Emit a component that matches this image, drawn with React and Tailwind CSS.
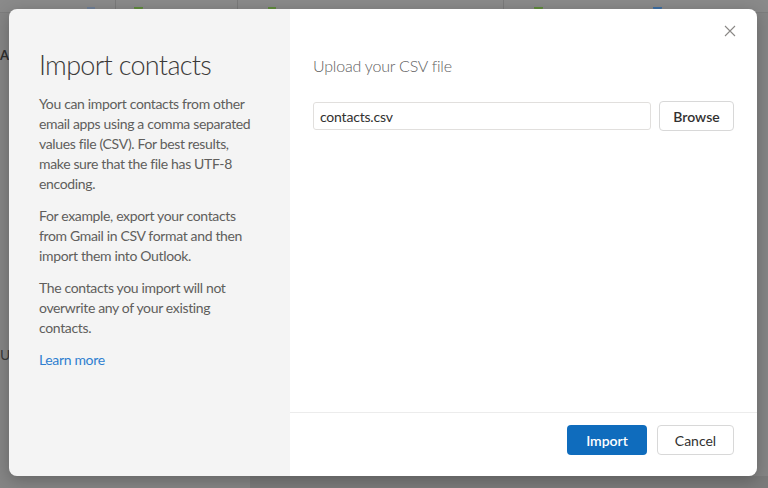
import React from "react";

const font = { fontFamily: 'Lato, "Noto Sans", sans-serif' };

function Backdrop() {
  return (
    <div className="flex flex-col w-full h-full">
      <div className="h-[13px] flex items-end border-b border-[#7d7d7d] bg-[#8a8a8a]">
        <div className="w-[116px] h-full border-r border-[#7a7a7a] flex items-end justify-end pr-[20px]">
          <div className="w-[8px] h-[2px] bg-[#6f7f96] mb-[3px]" />
        </div>
        <div className="w-[122px] h-full border-r border-[#7a7a7a] flex items-end pl-[18px]">
          <div className="w-[9px] h-[5px] rounded-b-full bg-[#5f8a3c]" />
        </div>
        <div className="w-[266px] h-full border-r border-[#7a7a7a] flex items-end pl-[30px] gap-[230px]">
          <div className="w-[8px] h-[5px] rounded-b-full bg-[#5f8a3c]" />
        </div>
        <div className="flex-1 h-full flex items-end pl-[30px] gap-[110px]">
          <div className="w-[9px] h-[5px] rounded-b-full bg-[#5f8a3c]" />
          <div className="w-[9px] h-[5px] rounded-b-full bg-[#3d6ea3]" />
        </div>
      </div>
      <div className="flex-1 flex">
        <div className="w-[9px] flex flex-col bg-[#858585]">
          <div className="h-[36px]" />
          <div className="text-[13px] font-bold text-[#2e2e2e] leading-none">A</div>
          <div className="h-[286px]" />
          <div className="text-[14px] text-[#3a3a3a] leading-none">U</div>
        </div>
        <div className="flex-1 bg-[#858585]" />
      </div>
      <div className="h-[12px] flex">
        <div className="w-[250px] bg-[#858585]" />
        <div className="flex-1 bg-[#7b7b7b]" />
      </div>
    </div>
  );
}

export default function App() {
  return (
    <div className="relative w-[768px] h-[488px] overflow-hidden bg-[#858585]" style={font}>
      <Backdrop />
      <div className="absolute left-[9px] top-[9px] w-[748px] h-[467px] rounded-[8px] overflow-hidden flex shadow-[0_4px_16px_rgba(0,0,0,0.25)]">
        <div className="w-[281px] bg-[#f4f4f4] pl-[30px] pr-[20px] pt-[38px]">
          <h1 className="text-[27px] font-light leading-[36px] text-[#3b3a39] tracking-[-0.7px]">Import contacts</h1>
          <div className="mt-[11px] text-[14px] leading-[20px] text-[#605e5c] tracking-[-0.35px] flex flex-col gap-[12px] whitespace-nowrap">
            <p>You can import contacts from other<br />email apps using a comma separated<br />values file (CSV). For best results,<br />make sure that the file has UTF-8<br />encoding.</p>
            <p>For example, export your contacts<br />from Gmail in CSV format and then<br />import them into Outlook.</p>
            <p>The contacts you import will not<br />overwrite any of your existing<br />contacts.</p>
            <p className="text-[#2f7fd0]">Learn more</p>
          </div>
        </div>
        <div className="flex-1 bg-white flex flex-col">
          <div className="flex-1 flex flex-col pl-[23px] pr-[23px]">
            <div className="flex justify-end pt-[16px] h-[44px]">
              <svg width="12" height="12" viewBox="0 0 12 12" className="mr-[-2px]">
                <path d="M1 1 L11 11 M11 1 L1 11" stroke="#8a8886" strokeWidth="1.1" fill="none" />
              </svg>
            </div>
            <div className="text-[16px] font-light text-[#616161] leading-[22px] mt-[2px] tracking-[-0.2px]">Upload your CSV file</div>
            <div className="flex gap-[8px] mt-[25px] items-start">
              <div className="flex-1 h-[28px] border border-[#e1dfdd] rounded-[3px] flex items-center pl-[6px] text-[14px] text-[#323130] tracking-[-0.2px]">contacts.csv</div>
              <button className="w-[75px] h-[30px] mt-[-1px] border border-[#d8d8d8] rounded-[4px] bg-white text-[14px] font-semibold text-[#323130] flex items-center justify-center">Browse</button>
            </div>
          </div>
          <div className="h-[64px] border-t border-[#ececec] flex justify-end items-start gap-[10px] pt-[12px] pr-[23px]">
            <button className="w-[80px] h-[30px] rounded-[4px] bg-[#0f6cbd] text-white text-[14px] font-semibold flex items-center justify-center">Import</button>
            <button className="w-[77px] h-[30px] rounded-[4px] border border-[#d8d8d8] bg-white text-[14px] text-[#323130] flex items-center justify-center">Cancel</button>
          </div>
        </div>
      </div>
    </div>
  );
}
